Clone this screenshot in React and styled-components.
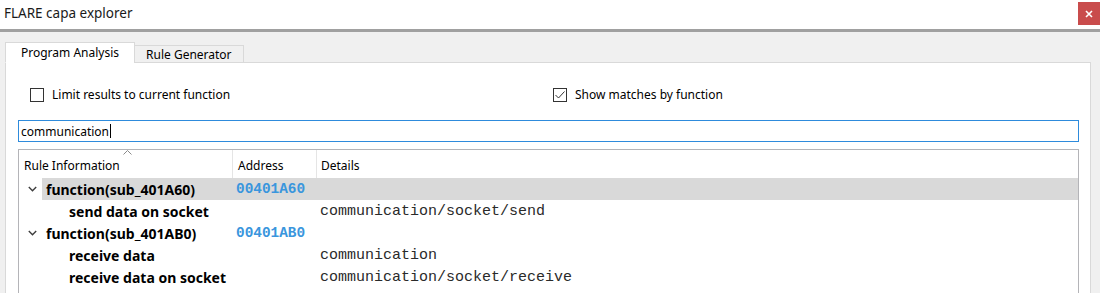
import styled, { createGlobalStyle } from "styled-components"

const GlobalStyle = createGlobalStyle`
  html, body {
    margin: 0;
    padding: 0;
    background: #f0f0f0;
    overflow: hidden;
  }
  body {
    font-family: "Noto Sans", "Liberation Sans", sans-serif;
    color: #000;
  }
`

const Window = styled.div`
  width: 1100px;
  height: 293px;
  display: flex;
  flex-direction: column;
  background: #f0f0f0;
`
const TitleBar = styled.div`
  height: 29px;
  background: #fff;
  border-bottom: 3px solid #a0a0a0;
  display: flex;
  align-items: flex-start;
  justify-content: space-between;
`
const Title = styled.span`
  font-size: 13.5px;
  padding: 4px 0 0 4px;
  color: #1a1a1a;
`
const CloseButton = styled.div`
  width: 22px;
  height: 23px;
  margin-top: 2px;
  background: #c94c4c;
  display: flex;
  align-items: center;
  justify-content: center;
`
const Body = styled.div`
  flex: 1;
  padding: 9px 9px 0 5px;
  display: flex;
  flex-direction: column;
`
const TabBar = styled.div`
  display: flex;
  align-items: flex-end;
  height: 21px;
  position: relative;
  z-index: 1;
`
const Tab = styled.div`
  height: ${({ $active }) => ($active ? "21px" : "18px")};
  padding: 0 ${({ $active }) => ($active ? "15px" : "11px")};
  background: ${({ $active }) => ($active ? "#fff" : "#f0f0f0")};
  border: 1px solid #d9d9d9;
  border-bottom: ${({ $active }) => ($active ? "1px solid #fff" : "1px solid #d9d9d9")};
  margin-left: ${({ $active }) => ($active ? "0" : "-1px")};
  display: flex;
  align-items: center;
  font-size: 12px;
  box-sizing: border-box;
  margin-bottom: -1px;
`
const Pane = styled.div`
  flex: 1;
  background: #fff;
  border: 1px solid #d9d9d9;
  border-bottom: none;
  padding: 23px 11px 0 12px;
  display: flex;
  flex-direction: column;
`
const OptionsRow = styled.div`
  display: grid;
  grid-template-columns: 523px 1fr;
  padding-left: 12px;
  height: 17px;
  align-items: center;
`
const Check = styled.label`
  display: flex;
  align-items: center;
  gap: 8px;
  font-size: 12px;
`
const Box = styled.span`
  width: 14px;
  height: 14px;
  border: 1px solid #333;
  box-sizing: border-box;
  display: flex;
  align-items: center;
  justify-content: center;
`
const Search = styled.div`
  margin-top: 17px;
  height: 22px;
  border: 1px solid #2e8bdc;
  box-sizing: border-box;
  display: flex;
  align-items: center;
  padding-left: 2px;
  font-size: 12px;
`
const Caret = styled.span`
  width: 1px;
  height: 14px;
  background: #000;
  margin-left: 1px;
`
const Tree = styled.div`
  margin-top: 7px;
  flex: 1;
  border: 1px solid #b4b4b8;
  border-bottom: none;
  display: flex;
  flex-direction: column;
`
const Columns = styled.div`
  display: grid;
  grid-template-columns: 214px 84px 265px;
`
const HeaderRow = styled(Columns)`
  height: 28px;
`
const HeaderCell = styled.div`
  font-size: 12px;
  padding-left: ${({ $pad }) => $pad}px;
  padding-top: 3px;
  border-right: 1px solid ${({ $last }) => ($last ? "transparent" : "#e5e5e5")};
  display: flex;
  align-items: center;
  position: relative;
`
const SortCaret = styled.svg`
  position: absolute;
  left: 104px;
  top: 0;
`
const Row = styled(Columns)`
  height: 22px;
  align-items: center;
  background: ${({ $selected }) =>
    $selected ? "linear-gradient(to right, transparent 23px, #d9d9d9 23px)" : "transparent"};
`
const NameCell = styled.div`
  display: flex;
  align-items: center;
  height: 100%;
  padding-left: ${({ $indent }) => $indent}px;
  font-size: 14px;
  font-weight: 700;
  white-space: nowrap;
`
const Chevron = styled.svg`
  margin-right: 9px;
  flex: none;
`
const Address = styled.div`
  font-family: "Liberation Mono", monospace;
  font-weight: 700;
  font-size: 14.4px;
  color: #3a96dd;
  padding-left: 3px;
`
const Detail = styled.div`
  font-family: "Liberation Mono", monospace;
  font-size: 15px;
  color: #2a2a2a;
  padding-left: 3px;
  white-space: nowrap;
`

const ChevronIcon = () => (
  <Chevron width="9" height="6" viewBox="0 0 9 6">
    <path d="M0.8 1 L4.5 4.7 L8.2 1" fill="none" stroke="#3c3c3c" strokeWidth="1.4" />
  </Chevron>
)

const rows = [
  { type: "fn", name: "function(sub_401A60)", addr: "00401A60", selected: true },
  { type: "rule", name: "send data on socket", detail: "communication/socket/send" },
  { type: "fn", name: "function(sub_401AB0)", addr: "00401AB0" },
  { type: "rule", name: "receive data", detail: "communication" },
  { type: "rule", name: "receive data on socket", detail: "communication/socket/receive" },
]

const App = () => {
  return (
    <Window>
      <GlobalStyle />
      <TitleBar>
        <Title>FLARE capa explorer</Title>
        <CloseButton>
          <svg width="8" height="8" viewBox="0 0 8 8">
            <path d="M1 1 L7 7 M7 1 L1 7" stroke="#fff" strokeWidth="1.6" />
          </svg>
        </CloseButton>
      </TitleBar>
      <Body>
        <TabBar>
          <Tab $active>Program Analysis</Tab>
          <Tab>Rule Generator</Tab>
        </TabBar>
        <Pane>
          <OptionsRow>
            <Check>
              <Box />
              Limit results to current function
            </Check>
            <Check>
              <Box>
                <svg width="12" height="12" viewBox="0 0 12 12">
                  <path d="M1.5 6 L4.5 9 L10.5 2.5" fill="none" stroke="#333" strokeWidth="1" />
                </svg>
              </Box>
              Show matches by function
            </Check>
          </OptionsRow>
          <Search>
            communication
            <Caret />
          </Search>
          <Tree>
            <HeaderRow>
              <HeaderCell $pad={5}>
                Rule Information
                <SortCaret width="9" height="5" viewBox="0 0 9 5">
                  <path d="M0.5 4.5 L4.5 0.5 L8.5 4.5" fill="none" stroke="#8a8a8a" strokeWidth="1" />
                </SortCaret>
              </HeaderCell>
              <HeaderCell $pad={5}>Address</HeaderCell>
              <HeaderCell $pad={4} $last>Details</HeaderCell>
            </HeaderRow>
            {rows.map((r, i) => (
              <Row key={i} $selected={r.selected}>
                {r.type === "fn" ? (
                  <NameCell $indent={9}>
                    <ChevronIcon />
                    {r.name}
                  </NameCell>
                ) : (
                  <NameCell $indent={50}>{r.name}</NameCell>
                )}
                <Address>{r.addr}</Address>
                <Detail>{r.detail}</Detail>
              </Row>
            ))}
          </Tree>
        </Pane>
      </Body>
    </Window>
  )
}

export default App
